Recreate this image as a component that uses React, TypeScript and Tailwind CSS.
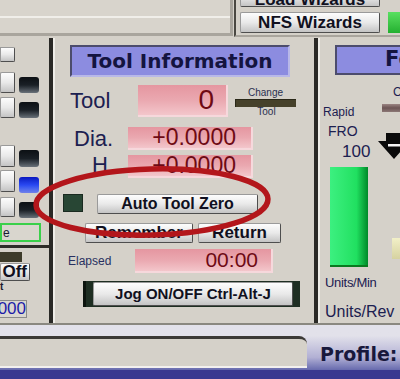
import React from "react"

const btn =
  "bg-gradient-to-b from-[#fdfdfd] via-[#e9e9e9] to-[#c4c4c4] border border-[#9a9a9a] border-r-[#4e4e4e] border-b-[#4e4e4e] rounded-[2px] flex items-center justify-center font-bold text-[#101020] whitespace-nowrap overflow-hidden"

const pink =
  "bg-gradient-to-b from-[#e596a0] via-[#eaa8b0] to-[#f3c6cb] border-r-2 border-b-2 border-[#f6d8dc] flex items-center justify-end text-[#6e0a14]"

const ledDark =
  "bg-gradient-to-b from-[#0c1014] via-[#1a2026] to-[#6a727a] rounded-[3px]"

function LeftPanel () {
  return (
    <div className="w-[53px] h-full border-r-[4px] border-[#2a2926] flex flex-col">
      <div className={`${btn} mt-[9px] w-[15px] h-[15px] rounded-l-none`} />
      <div className="mt-[10px] h-[21px] flex">
        <div className={`${btn} w-[15px] h-[21px]`} />
        <div className={`${ledDark} ml-[4px] mt-[5px] w-[20px] h-[16px]`} />
      </div>
      <div className="mt-[4px] h-[21px] flex">
        <div className={`${btn} w-[15px] h-[21px]`} />
        <div className={`${ledDark} ml-[4px] mt-[5px] w-[20px] h-[16px]`} />
      </div>
      <div className="mt-[27px] h-[22px] flex">
        <div className={`${btn} w-[15px] h-[22px]`} />
        <div className={`${ledDark} ml-[4px] mt-[5px] w-[20px] h-[17px]`} />
      </div>
      <div className="mt-[3px] h-[22px] flex">
        <div className={`${btn} w-[15px] h-[22px]`} />
        <div className="ml-[4px] mt-[7px] w-[20px] h-[16px] rounded-[3px] bg-gradient-to-b from-[#0a16c0] via-[#2a48f2] to-[#7080ea]" />
      </div>
      <div className="mt-[5px] h-[20px] flex">
        <div className={`${btn} w-[15px] h-[20px]`} />
        <div className={`${ledDark} ml-[4px] mt-[5px] w-[20px] h-[16px]`} />
      </div>
      <div className="mt-[6px] w-[41px] h-[19px] border-2 border-[#3ad04a] bg-[#d9d6ce] flex items-center pl-[1px] text-[12px] text-[#1a1a30]">
        e
      </div>
      <div className="mt-[3px] h-[3px] w-full bg-[#2e2c28]" />
      <div className="mt-[4px] w-[22px] h-[10px] bg-[#3d3b2a]" />
      <div className={`${btn} mt-[1px] w-[30px] h-[18px] justify-end pr-[2px] text-[17px]`}>Off</div>
      <div className="mt-[1px] h-[9px] text-[10px] leading-[9px] font-bold text-[#1a1a30]">t</div>
      <div className="mt-[9px] w-[27px] h-[18px] border border-[#8a8a8a] border-l-0 bg-[#dad7d0] flex items-center justify-end overflow-hidden text-[17px] text-[#1c1ca8]">
        000
      </div>
    </div>
  )
}

function CenterPanel () {
  return (
    <div className="w-[265px] h-full border-l-2 border-[#efede8] border-r-[4px] border-r-[#2a2926] flex flex-col">
      <div className="mt-[7px] ml-[15px] w-[220px] h-[32px] bg-[#8c8ce0] border-2 border-[#4c4c6c] border-r-[#b8b8e8] border-b-[#b8b8e8] flex items-center justify-center text-[20px] font-bold text-[#141440]" style={{ fontFamily: '"DejaVu Sans", Verdana, sans-serif' }}>
        Tool Information
      </div>

      <div className="mt-[8px] h-[32px] flex">
        <div className="ml-[15px] w-[68px] text-[22px] leading-[32px] text-[#1c2050]">Tool</div>
        <div className={`${pink} w-[90px] h-[32px] pr-[12px] text-[28px]`}>0</div>
        <div className="ml-[7px] w-[61px] flex flex-col items-center">
          <div className="mt-[1px] h-[13px] text-[10px] leading-[13px] text-[#2a3050]">Change</div>
          <div className="w-[61px] h-[12px] bg-[#46412a] border-t border-l border-[#2a2818]" />
          <div className="h-[10px] text-[10px] leading-[10px] text-[#2a3050] pl-[2px]">Tool</div>
        </div>
      </div>

      <div className="mt-[10px] h-[23px] flex">
        <div className="ml-[19px] w-[54px] text-[22px] leading-[23px] text-[#1c2050]">Dia.</div>
        <div className={`${pink} w-[125px] h-[23px] pr-[15px] text-[23px]`}>+0.0000</div>
      </div>

      <div className="mt-[5px] h-[23px] flex">
        <div className="ml-[37px] w-[36px] text-[22px] leading-[20px] text-[#1c2050]">H</div>
        <div className={`${pink} w-[125px] h-[23px] pr-[15px] text-[23px]`}>+0.0000</div>
      </div>

      <div className="mt-[15px] h-[21px] flex">
        <div className="ml-[8px] mt-[1px] w-[20px] h-[18px] bg-[#284634] border border-[#1a2a20]" />
        <div className={`${btn} ml-[14px] mt-[1px] w-[161px] h-[20px] text-[16px]`}>Auto Tool Zero</div>
      </div>

      <div className="mt-[9px] h-[20px] flex">
        <div className={`${btn} ml-[30px] w-[108px] h-[20px] text-[17px]`}>Remember</div>
        <div className={`${btn} ml-[5px] w-[83px] h-[20px] text-[17px]`}>Return</div>
      </div>

      <div className="mt-[6px] h-[24px] flex">
        <div className="ml-[13px] w-[67px] text-[12px] leading-[24px] text-[#283060]">Elapsed</div>
        <div className={`${pink} w-[138px] h-[24px] pr-[13px] text-[21px]`}>00:00</div>
      </div>

      <div className="mt-[8px] ml-[28px] w-[217px] h-[26px] bg-[#1e2e22] border-l-[3px] border-[#0c140e] flex px-[7px] py-[1px]">
        <div className={`${btn} w-full h-full text-[15px]`}>Jog ON/OFF Ctrl-Alt-J</div>
      </div>
    </div>
  )
}

function RightPanel () {
  return (
    <div className="flex-1 h-full border-l-2 border-[#efede8] flex flex-col overflow-hidden">
      <div className="mt-[7px] ml-[15px] w-[200px] h-[30px] shrink-0 bg-[#8c8ce0] border-2 border-[#4c4c6c] flex items-center pl-[48px] text-[21px] font-bold text-[#141440] whitespace-nowrap" style={{ fontFamily: '"DejaVu Sans", Verdana, sans-serif' }}>
        Feed Rate
      </div>
      <div className="flex">
        <div className="w-[58px] shrink-0 flex flex-col text-[#1c2050]">
          <div className="mt-[30px] ml-[3px] h-[14px] text-[12px] leading-[14px]">Rapid</div>
          <div className="mt-[4px] ml-[8px] h-[16px] text-[14px] leading-[16px]">FRO</div>
          <div className="mt-[4px] ml-[22px] h-[18px] text-[17px] leading-[18px]">100</div>
          <div className="mt-[6px] ml-[10px] w-[38px] h-[100px] bg-gradient-to-r from-[#3cf080] via-[#20e060] via-70% to-[#008a28] border-b-2 border-[#0a7a20]" />
          <div className="mt-[8px] ml-[5px] h-[15px] text-[13px] leading-[15px] tracking-[-0.3px] whitespace-nowrap">Units/Min</div>
          <div className="mt-[12px] ml-[5px] h-[19px] text-[16px] leading-[19px] whitespace-nowrap">Units/Rev</div>
        </div>
        <div className="flex-1 flex flex-col">
          <div className="mt-[12px] ml-[15px] h-[11px] text-[12px] leading-[11px] text-[#1c2050]">C</div>
          <div className="mt-[6px] ml-[4px] w-[30px] h-[8px] bg-gradient-to-b from-[#9a8482] via-[#6c5454] to-[#8c7876]" />
          <svg className="mt-[21px]" width="30" height="26" viewBox="0 0 30 26">
            <polygon points="8,0 30,0 30,8 32,8 16,26 0,8 8,8" fill="#0a0a0a" />
            <rect x="10" y="11" width="14" height="2.5" fill="#f4f4f4" />
          </svg>
          <div className="mt-[79px] ml-[14px] w-[20px] h-[21px] bg-gradient-to-b from-[#f2f0c8] to-[#d6d2a0]" />
        </div>
      </div>
    </div>
  )
}

export default function App () {
  return (
    <div className="relative w-[400px] h-[379px] overflow-hidden bg-[#d5d1c9] flex flex-col" style={{ fontFamily: '"Liberation Sans", Arial, sans-serif' }}>
      {/* top strip */}
      <div className="h-[38px] flex shrink-0">
        <div className="w-[238px] h-[36px] border-r-[3px] border-b-[3px] border-[#a9a59d] bg-[#d8d4cc]">
          <div className="h-[18px] border-b-2 border-[#f0eee9]" />
        </div>
        <div className="ml-[1px] flex-1 h-[37px] border-l-2 border-[#4a4842] border-b-2 border-b-[#a9a59d] pl-[4px] flex">
          <div className="w-[140px] flex flex-col">
            <div className={`${btn} -mt-[13px] h-[20px] text-[17px] leading-[17px] pt-[5px]`}>Load Wizards</div>
            <div className={`${btn} mt-[5px] h-[21px] text-[17px]`}>NFS Wizards</div>
          </div>
          <div className="ml-[8px] mt-[12px] w-[12px] h-[21px] bg-gradient-to-b from-[#58e060] to-[#22b030]" />
        </div>
      </div>

      {/* panels */}
      <div className="h-[287px] flex shrink-0 border-b-2 border-[#8a8880]">
        <LeftPanel />
        <CenterPanel />
        <RightPanel />
      </div>

      {/* bottom */}
      <div className="flex-1 flex flex-col bg-gradient-to-b from-[#e2e1ea] from-20% via-[#b2b0d4] via-60% to-[#3a3890]">
        <div className="mt-[11px] h-[34px] flex">
          <div className="w-[307px] h-[32px] bg-[#d5d1c9] border-t-[3px] border-[#3b3936] border-b-2 border-b-[#f2f0ee] rounded-tr-[8px]" />
          <div className="ml-[13px] mt-[4px] text-[19px] font-bold text-[#18183c] whitespace-nowrap" style={{ fontFamily: '"DejaVu Sans", Verdana, sans-serif' }}>
            Profile:
          </div>
        </div>
        <div className="flex-1 bg-[#3a3890]" />
      </div>

      {/* red ellipse annotation */}
      <svg className="absolute inset-0 pointer-events-none" width="400" height="379" viewBox="0 0 400 379">
        <ellipse cx="152" cy="202" rx="116" ry="33" transform="rotate(-1.5 152 202)" fill="none" stroke="#b3161b" strokeWidth="5.5" />
      </svg>
    </div>
  )
}
